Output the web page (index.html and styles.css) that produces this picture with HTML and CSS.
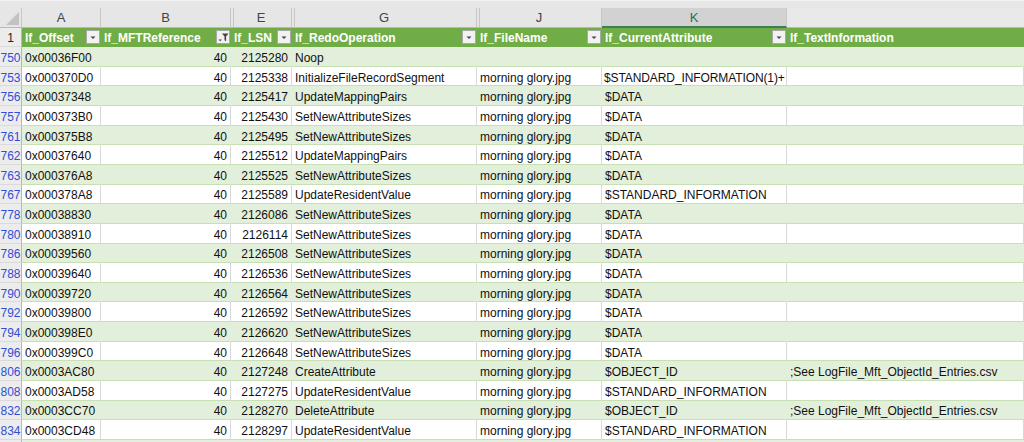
FILE: index.html
```html
<!DOCTYPE html>
<html lang="ja">
<head>
<meta charset="utf-8">
<title>LogFile</title>
<link rel="stylesheet" href="styles.css">
</head>
<body>
<div class="sheet">
  <div class="topband"></div>
  <div class="row colhdr">
    <div class="ch corner"><span class="tri"></span></div>
    <div class="ch">A</div>
    <div class="ch">B</div>
    <div class="ch gap">E</div>
    <div class="ch gap">G</div>
    <div class="ch gap">J</div>
    <div class="ch sel">K</div>
    <div class="ch blank"></div>
  </div>
  <div class="row hdr">
    <div class="rn">1</div>
    <div class="c hc"><span>lf_Offset</span><svg class="fb" viewBox="0 0 14 14"><rect x="0.5" y="0.5" width="13" height="13" fill="#f2f2f2" stroke="#a8a8a8"/><path d="M4.5 6.5h5l-2.5 2.5z" fill="#444"/></svg></div>
    <div class="c hc"><span>lf_MFTReference</span><svg class="fb" viewBox="0 0 14 14"><rect x="0.5" y="0.5" width="13" height="13" fill="#f2f2f2" stroke="#a8a8a8"/><path d="M2.5 9.5h3.4l-1.7 1.7z" fill="#444"/><path d="M6 3.5h6.5l-2.4 3v4.8l-1.6-1.1V6.5z" fill="#444"/></svg></div>
    <div class="c hc"><span>lf_LSN</span><svg class="fb" viewBox="0 0 14 14"><rect x="0.5" y="0.5" width="13" height="13" fill="#f2f2f2" stroke="#a8a8a8"/><path d="M4.5 6.5h5l-2.5 2.5z" fill="#444"/></svg></div>
    <div class="c hc"><span>lf_RedoOperation</span><svg class="fb" viewBox="0 0 14 14"><rect x="0.5" y="0.5" width="13" height="13" fill="#f2f2f2" stroke="#a8a8a8"/><path d="M4.5 6.5h5l-2.5 2.5z" fill="#444"/></svg></div>
    <div class="c hc"><span>lf_FileName</span><svg class="fb" viewBox="0 0 14 14"><rect x="0.5" y="0.5" width="13" height="13" fill="#f2f2f2" stroke="#a8a8a8"/><path d="M4.5 6.5h5l-2.5 2.5z" fill="#444"/></svg></div>
    <div class="c hc"><span>lf_CurrentAttribute</span><svg class="fb" viewBox="0 0 14 14"><rect x="0.5" y="0.5" width="13" height="13" fill="#f2f2f2" stroke="#a8a8a8"/><path d="M4.5 6.5h5l-2.5 2.5z" fill="#444"/></svg></div>
    <div class="c hc"><span>lf_TextInformation</span></div>
  </div>

  <div class="row band"><div class="rn f">750</div><div class="c">0x00036F00</div><div class="c r">40</div><div class="c r">2125280</div><div class="c">Noop</div><div class="c"></div><div class="c"></div><div class="c"></div></div>
  <div class="row"><div class="rn f">753</div><div class="c">0x000370D0</div><div class="c r">40</div><div class="c r">2125338</div><div class="c">InitializeFileRecordSegment</div><div class="c">morning glory.jpg</div><div class="c k">$STANDARD_INFORMATION(1)+</div><div class="c"></div></div>
  <div class="row band"><div class="rn f">756</div><div class="c">0x00037348</div><div class="c r">40</div><div class="c r">2125417</div><div class="c">UpdateMappingPairs</div><div class="c">morning glory.jpg</div><div class="c">$DATA</div><div class="c"></div></div>
  <div class="row"><div class="rn f">757</div><div class="c">0x000373B0</div><div class="c r">40</div><div class="c r">2125430</div><div class="c">SetNewAttributeSizes</div><div class="c">morning glory.jpg</div><div class="c">$DATA</div><div class="c"></div></div>
  <div class="row band"><div class="rn f">761</div><div class="c">0x000375B8</div><div class="c r">40</div><div class="c r">2125495</div><div class="c">SetNewAttributeSizes</div><div class="c">morning glory.jpg</div><div class="c">$DATA</div><div class="c"></div></div>
  <div class="row"><div class="rn f">762</div><div class="c">0x00037640</div><div class="c r">40</div><div class="c r">2125512</div><div class="c">UpdateMappingPairs</div><div class="c">morning glory.jpg</div><div class="c">$DATA</div><div class="c"></div></div>
  <div class="row band"><div class="rn f">763</div><div class="c">0x000376A8</div><div class="c r">40</div><div class="c r">2125525</div><div class="c">SetNewAttributeSizes</div><div class="c">morning glory.jpg</div><div class="c">$DATA</div><div class="c"></div></div>
  <div class="row"><div class="rn f">767</div><div class="c">0x000378A8</div><div class="c r">40</div><div class="c r">2125589</div><div class="c">UpdateResidentValue</div><div class="c">morning glory.jpg</div><div class="c">$STANDARD_INFORMATION</div><div class="c"></div></div>
  <div class="row band"><div class="rn f">778</div><div class="c">0x00038830</div><div class="c r">40</div><div class="c r">2126086</div><div class="c">SetNewAttributeSizes</div><div class="c">morning glory.jpg</div><div class="c">$DATA</div><div class="c"></div></div>
  <div class="row"><div class="rn f">780</div><div class="c">0x00038910</div><div class="c r">40</div><div class="c r">2126114</div><div class="c">SetNewAttributeSizes</div><div class="c">morning glory.jpg</div><div class="c">$DATA</div><div class="c"></div></div>
  <div class="row band"><div class="rn f">786</div><div class="c">0x00039560</div><div class="c r">40</div><div class="c r">2126508</div><div class="c">SetNewAttributeSizes</div><div class="c">morning glory.jpg</div><div class="c">$DATA</div><div class="c"></div></div>
  <div class="row"><div class="rn f">788</div><div class="c">0x00039640</div><div class="c r">40</div><div class="c r">2126536</div><div class="c">SetNewAttributeSizes</div><div class="c">morning glory.jpg</div><div class="c">$DATA</div><div class="c"></div></div>
  <div class="row band"><div class="rn f">790</div><div class="c">0x00039720</div><div class="c r">40</div><div class="c r">2126564</div><div class="c">SetNewAttributeSizes</div><div class="c">morning glory.jpg</div><div class="c">$DATA</div><div class="c"></div></div>
  <div class="row"><div class="rn f">792</div><div class="c">0x00039800</div><div class="c r">40</div><div class="c r">2126592</div><div class="c">SetNewAttributeSizes</div><div class="c">morning glory.jpg</div><div class="c">$DATA</div><div class="c"></div></div>
  <div class="row band"><div class="rn f">794</div><div class="c">0x000398E0</div><div class="c r">40</div><div class="c r">2126620</div><div class="c">SetNewAttributeSizes</div><div class="c">morning glory.jpg</div><div class="c">$DATA</div><div class="c"></div></div>
  <div class="row"><div class="rn f">796</div><div class="c">0x000399C0</div><div class="c r">40</div><div class="c r">2126648</div><div class="c">SetNewAttributeSizes</div><div class="c">morning glory.jpg</div><div class="c">$DATA</div><div class="c"></div></div>
  <div class="row band"><div class="rn f">806</div><div class="c">0x0003AC80</div><div class="c r">40</div><div class="c r">2127248</div><div class="c">CreateAttribute</div><div class="c">morning glory.jpg</div><div class="c">$OBJECT_ID</div><div class="c">;See LogFile_Mft_ObjectId_Entries.csv</div></div>
  <div class="row"><div class="rn f">808</div><div class="c">0x0003AD58</div><div class="c r">40</div><div class="c r">2127275</div><div class="c">UpdateResidentValue</div><div class="c">morning glory.jpg</div><div class="c">$STANDARD_INFORMATION</div><div class="c"></div></div>
  <div class="row band"><div class="rn f">832</div><div class="c">0x0003CC70</div><div class="c r">40</div><div class="c r">2128270</div><div class="c">DeleteAttribute</div><div class="c">morning glory.jpg</div><div class="c">$OBJECT_ID</div><div class="c">;See LogFile_Mft_ObjectId_Entries.csv</div></div>
  <div class="row"><div class="rn f">834</div><div class="c">0x0003CD48</div><div class="c r">40</div><div class="c r">2128297</div><div class="c">UpdateResidentValue</div><div class="c">morning glory.jpg</div><div class="c">$STANDARD_INFORMATION</div><div class="c"></div></div>
  <div class="row band"><div class="rn"></div><div class="c"></div><div class="c"></div><div class="c"></div><div class="c"></div><div class="c"></div><div class="c"></div><div class="c"></div></div>
</div>
</body>
</html>
```

FILE: styles.css
```css
* { box-sizing: border-box; }
html, body { margin: 0; padding: 0; background: #ffffff; }
body { width: 1024px; height: 442px; overflow: hidden; font-family: "Liberation Sans", Arial, sans-serif; font-size: 12px; color: #111; }

.sheet { width: 1024px; }

.topband { height: 8px; background: #e6e6e6; border-top: 1px solid #f2f2f2; }

.row {
  display: grid;
  grid-template-columns: 22px 79px 130px 61px 185px 125px 185px 1fr;
  height: 19.65px;
}

.colhdr { height: 19.5px; background: #e6e6e6; }
.ch {
  display: flex; align-items: center; justify-content: center;
  font-size: 13px; color: #444;
  border-right: 1px solid #c6c6c6;
  border-bottom: 1px solid #b8b8b8;
  padding-top: 1px;
}
.ch.gap { box-shadow: inset 2px 0 0 #e6e6e6, inset 3px 0 0 #c6c6c6; }
.ch.sel { background: #d2d2d2; color: #2f6e4a; border-bottom: 2px solid #3f7d55; }
.ch.blank { border-right: none; background: #e9e9e9; }
.corner { justify-content: flex-end; align-items: flex-end; }
.tri {
  width: 0; height: 0; margin: 0 2px 2px 0;
  border-left: 13px solid transparent;
  border-bottom: 13px solid #c2c2c2;
}

.rn {
  display: flex; align-items: center; justify-content: center;
  padding-top: 3px;
  background: #ececec;
  border-right: 1px solid #b8b8b8;
  border-bottom: 1px solid #dadada;
  color: #222; font-size: 12px;
}
.rn.f { color: #2d4fd6; }

.c {
  display: flex; align-items: center;
  padding: 3px 3px 0;
  white-space: nowrap; overflow: hidden;
  border-right: 1px solid #d9d9d9;
  border-bottom: 1px solid #c6e0b4;
  color: #111;
}
.c.r { justify-content: flex-end; }
.c.k { padding-left: 2px; letter-spacing: -0.1px; }

.band .c { background: #e2efda; border-right-color: #e2efda; }

.hdr .c {
  background: #70ad47; color: #ffffff; font-weight: bold;
  border-right: none; border-bottom: 1px solid #70ad47;
  justify-content: space-between; padding-right: 1px;
}
.hdr .rn { color: #222; }
.fb { width: 14px; height: 14px; flex: none; margin-top: -2px; }
```
